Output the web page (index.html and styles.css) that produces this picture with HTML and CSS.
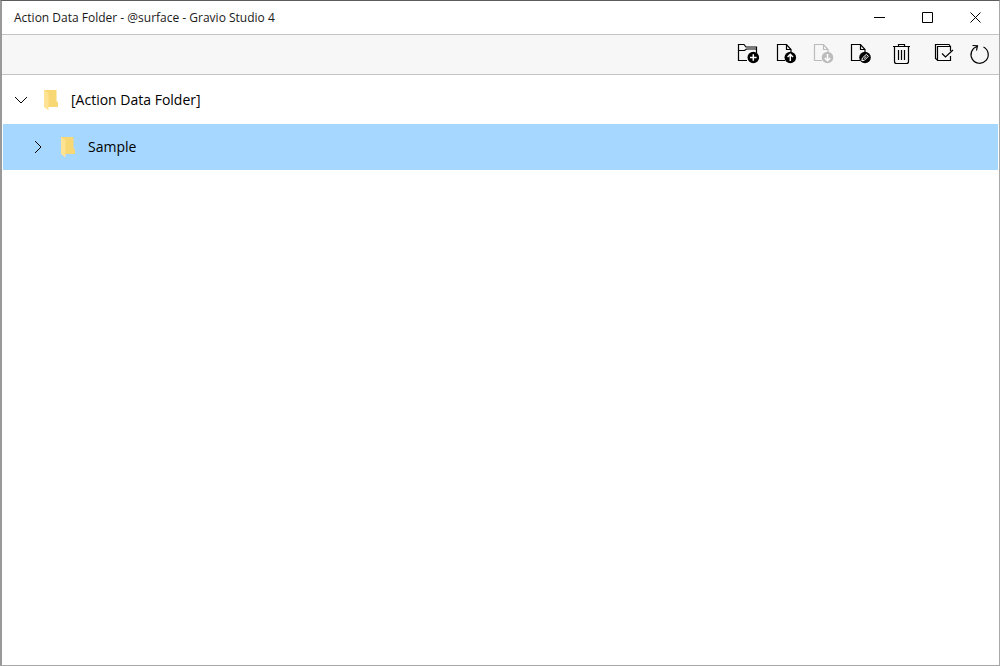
FILE: index.html
```html
<!DOCTYPE html>
<html lang="en">
<head>
<meta charset="utf-8">
<title>Action Data Folder - @surface - Gravio Studio 4</title>
<link rel="stylesheet" href="styles.css">
</head>
<body>
<div class="window">
  <header class="titlebar">
    <h1 class="title">Action Data Folder - @surface - Gravio Studio 4</h1>
    <div class="window-controls">
      <button class="control" type="button" aria-label="Minimize"><svg width="12" height="12" viewBox="0 0 12 12"><path d="M1 5.500h11" /></svg></button>
      <button class="control" type="button" aria-label="Maximize"><svg width="12" height="12" viewBox="0 0 12 12"><path d="M1.500 .500h10v10h-10z" /></svg></button>
      <button class="control" type="button" aria-label="Close"><svg width="12" height="12" viewBox="0 0 12 12"><path d="M1.500 .500l10 10M11.500 .500l-10 10" /></svg></button>
    </div>
  </header>

  <div class="toolbar" role="toolbar" aria-label="Folder actions">
    <div class="group files">
      <button class="tool" type="button" aria-label="New folder"><svg width="24" height="24" viewBox="0 0 24 24"><path d="M12 18.500H3.500v-16h5.500l2 2.500h10.500v6M3.500 8.500h6l2-1.500h10" /><circle class="solid" cx="18.300" cy="15.500" r="5.800" /><path class="mark" d="M18.300 12.200v6.600M15 15.500h6.600" /></svg></button>
      <button class="tool" type="button" aria-label="Upload file"><svg width="24" height="24" viewBox="0 0 24 24"><path d="M12 18.500H4.500v-16H13.500L18 7.500V10M13.500 2.500v5H18" /><circle class="solid" cx="17.300" cy="15.500" r="5.800" /><path class="mark" d="M17.300 19v-6.500M14.600 15l2.700-2.700L20 15" /></svg></button>
      <button class="tool" type="button" aria-label="Download file" disabled><svg width="24" height="24" viewBox="0 0 24 24"><path d="M11 18.500H3.500v-16H12.500L17 7.500V10M12.500 2.500v5H17" /><circle class="solid" cx="16.500" cy="15.500" r="5.800" /><path class="mark" d="M16.500 12v6.500M13.800 16l2.700 2.700L19.200 16" /></svg></button>
      <button class="tool" type="button" aria-label="Edit file"><svg width="24" height="24" viewBox="0 0 24 24"><path d="M11 18.500H2.500v-16H11.500L16 7.500V10M11.500 2.500v5H16" /><circle class="solid" cx="16" cy="15.500" r="5.800" /><path class="mark thin" d="M12.800 18.700l.6-2.700 4-3.700 2 2-4 4zM14.800 16.800l2.600-2.500" /></svg></button>
    </div>
    <button class="tool" type="button" aria-label="Delete"><svg width="24" height="24" viewBox="0 0 24 24"><path d="M4 4.500h17M9.500 4.500v-2h6v2M5.500 4.500v15q0 2 2 2h10q2 0 2-2v-15M9.500 8v10M12.500 8v10M15.500 8v10" /></svg></button>
    <div class="group">
      <button class="tool" type="button" aria-label="Select all"><svg width="24" height="24" viewBox="0 0 24 24"><path d="M5.500 18l-2-1.500V2.500H17l1.500 2M18.500 9V4.500h-13v14h13V14M10 11.500l3.500 3.500 7.500-7" /></svg></button>
      <button class="tool" type="button" aria-label="Refresh"><svg width="24" height="24" viewBox="0 0 24 24"><path d="M15.500 5A8.600 8.600 0 1 1 9 4.500M4.500 3.500L9.500 3.700L8.500 8.500" /></svg></button>
    </div>
  </div>

  <main class="tree" role="tree" aria-label="Folders">
    <div class="row" role="treeitem" aria-expanded="true">
      <button class="toggle" type="button" aria-label="Collapse"><svg width="14" height="14" viewBox="0 0 14 14"><path d="M1 4l6 6 6-6" /></svg></button>
      <svg class="folder" width="16" height="22" viewBox="0 0 16 22"><path class="folder-back" d="M1 1h12.500v11l1.500 1.500V18H5z" /><path class="folder-front" d="M1 1l4.500 3v17.500L1 18z" /></svg>
      <span class="name">[Action Data Folder]</span>
    </div>
    <div class="row child selected" role="treeitem" aria-expanded="false" aria-selected="true">
      <button class="toggle" type="button" aria-label="Expand"><svg width="14" height="14" viewBox="0 0 14 14"><path d="M4 1l6 6-6 6" /></svg></button>
      <svg class="folder" width="16" height="22" viewBox="0 0 16 22"><path class="folder-back" d="M1 1h12.500v11l1.500 1.500V18H5z" /><path class="folder-front" d="M1 1l4.500 3v17.500L1 18z" /></svg>
      <span class="name">Sample</span>
    </div>
  </main>
</div>
</body>
</html>
```
FILE: styles.css
```css
* { box-sizing: border-box; }

body {
  margin: 0;
  font-family: "Open Sans", "Noto Sans", sans-serif;
  color: #000;
}

.window {
  display: flex;
  flex-direction: column;
  min-height: 100vh;
  border: 1px solid #a8a8a8;
  border-top-color: #5c5c5c;
  border-left: 2px solid #999;
  background: #fff;
}

button {
  display: flex;
  align-items: center;
  justify-content: center;
  padding: 0;
  border: 0;
  background: transparent;
  color: inherit;
}

svg {
  display: block;
  fill: none;
  stroke: currentColor;
  stroke-width: 1;
}

.titlebar {
  display: flex;
  justify-content: space-between;
  height: 34px;
  border-bottom: 1px solid #c4c4c4;
}

.title {
  margin: 0;
  padding-left: 12px;
  color: #1a1a1a;
  font-size: 12px;
  font-weight: 400;
  line-height: 34px;
}

.window-controls { display: flex; }

.control { width: 48px; }

.toolbar {
  display: flex;
  align-items: center;
  justify-content: flex-end;
  height: 40px;
  padding: 0 1px 2px 0;
  border-bottom: 1px solid #c4c4c4;
  background: #f7f7f7;
}

.group { display: flex; }

.files {
  gap: 2px;
  margin-right: 4px;
}

.toolbar > .tool { margin-right: 7px; }

.tool {
  width: 36px;
  height: 36px;
}

.tool svg { stroke-width: 1.2; }

.tool:disabled { color: #bcbcbc; }

.solid {
  fill: currentColor;
  stroke: none;
}

.mark {
  stroke: #fff;
  stroke-width: 1.5;
}

.thin { stroke-width: 1; }

.tree { flex: 1; }

.row {
  display: flex;
  align-items: center;
  height: 49px;
  padding-left: 12px;
}

.child {
  height: 46px;
  margin: 0 1px;
  padding-left: 28px;
}

.selected { background: #a6d7ff; }

.toggle svg { stroke-width: 1; }

.folder {
  margin: 0 12px 0 15px;
  stroke: none;
}

.folder-back { fill: #f8d775; }

.folder-front { fill: #ffe394; }

.name {
  font-size: 14px;
  line-height: 20px;
}
```
